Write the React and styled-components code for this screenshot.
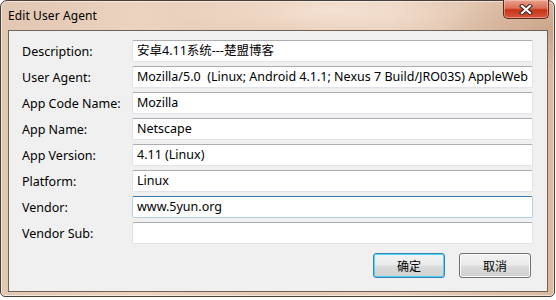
import React from "react";
import styled, { createGlobalStyle } from "styled-components";

const GlobalStyle = createGlobalStyle`
  html, body {
    margin: 0;
    padding: 0;
    background: #ffffff;
  }
  body {
    font-family: "Noto Sans", "Noto Sans CJK SC", sans-serif;
  }
`;

const Window = styled.div`
  box-sizing: border-box;
  width: 555px;
  height: 297px;
  display: flex;
  flex-direction: column;
  border: 1px solid #4a3f38;
  border-radius: 7px 7px 5px 5px;
  background:
    radial-gradient(ellipse 120px 40px at 560px 30px, rgba(150, 100, 70, 0.25), transparent),
    radial-gradient(ellipse 160px 30px at 330px 10px, rgba(255, 240, 228, 0.6), transparent),
    linear-gradient(90deg, #e2c7b2 0%, #ebd3c0 25%, #e5c9b3 50%, #e8cfbc 70%, #dbb99f 100%);
  box-shadow: inset 0 0 0 1px rgba(255, 255, 255, 0.55);
  padding: 0 6px 4px 7px;
`;

const TitleBar = styled.div`
  height: 29px;
  display: flex;
  align-items: flex-start;
  justify-content: space-between;
`;

const Title = styled.span`
  font-size: 12px;
  color: #000;
  line-height: 1;
  margin-top: 9px;
  letter-spacing: 0.1px;
`;

const CloseButton = styled.div`
  width: 46px;
  height: 19px;
  margin-top: -1px;
  margin-right: -1px;
  box-sizing: border-box;
  border: 1px solid #5a2a22;
  border-top: none;
  border-radius: 0 0 5px 5px;
  background: linear-gradient(180deg, #eaa08e 0%, #db6f56 45%, #c6341a 55%, #d9553a 100%);
  box-shadow: inset 0 0 0 1px rgba(255, 220, 210, 0.45);
  display: flex;
  align-items: center;
  justify-content: center;
`;

const Client = styled.div`
  flex: 1;
  box-sizing: border-box;
  border: 1px solid #6f6259;
  background: #f0f0f0;
  padding: 9px 14px 0 13px;
  display: flex;
  flex-direction: column;
`;

const Form = styled.div`
  display: flex;
  flex-direction: column;
  gap: 4px;
`;

const Row = styled.div`
  display: flex;
  align-items: center;
  height: 22px;
`;

const Label = styled.label`
  width: 110px;
  flex: none;
  font-size: 12.5px;
  color: #000;
  white-space: nowrap;
`;

const Field = styled.div`
  flex: 1;
  box-sizing: border-box;
  height: 22px;
  background: #fff;
  border: 1px solid ${(p) => (p.focused ? "#b5cfe7" : "#e2e3ea")};
  border-top-color: ${(p) => (p.focused ? "#3d7bad" : "#abadb3")};
  border-radius: 2px;
  padding: 0 4px;
  font-size: 12.5px;
  line-height: 20px;
  color: #000;
  white-space: pre;
  overflow: hidden;
`;

const Buttons = styled.div`
  display: flex;
  justify-content: flex-end;
  gap: 14px;
  margin-top: 9px;
  padding-right: 2px;
`;

const Button = styled.div`
  width: 72px;
  height: 25px;
  box-sizing: border-box;
  border: 1px solid ${(p) => (p.primary ? "#3c7fb1" : "#707070")};
  border-radius: 3px;
  background: linear-gradient(180deg, #f2f2f2 0%, #ebebeb 48%, #dddddd 52%, #cfcfcf 100%);
  box-shadow: inset 0 0 0 1px ${(p) => (p.primary ? "#48d8fb" : "#fcfcfc")};
  display: flex;
  align-items: center;
  justify-content: center;
  font-family: "Noto Sans CJK SC", sans-serif;
  font-size: 12px;
  color: #000;
`;

const fields = [
  ["Description:", "安卓4.11系统---楚盟博客"],
  ["User Agent:", "Mozilla/5.0  (Linux; Android 4.1.1; Nexus 7 Build/JRO03S) AppleWeb"],
  ["App Code Name:", "Mozilla"],
  ["App Name:", "Netscape"],
  ["App Version:", "4.11 (Linux)"],
  ["Platform:", "Linux"],
  ["Vendor:", "www.5yun.org", true],
  ["Vendor Sub:", ""],
];

export default function App() {
  return (
    <>
      <GlobalStyle />
      <Window>
        <TitleBar>
          <Title>Edit User Agent</Title>
          <CloseButton>
            <svg width="14" height="11" viewBox="0 0 14 11">
              <path d="M3 2 L11 9 M11 2 L3 9" stroke="#3a2420" strokeWidth="4.2" strokeLinecap="square" />
              <path d="M3 2 L11 9 M11 2 L3 9" stroke="#ffffff" strokeWidth="2.2" strokeLinecap="square" />
            </svg>
          </CloseButton>
        </TitleBar>
        <Client>
          <Form>
            {fields.map(([label, value, focused]) => (
              <Row key={label}>
                <Label>{label}</Label>
                <Field focused={focused}>{value}</Field>
              </Row>
            ))}
          </Form>
          <Buttons>
            <Button primary>确定</Button>
            <Button>取消</Button>
          </Buttons>
        </Client>
      </Window>
    </>
  );
}
